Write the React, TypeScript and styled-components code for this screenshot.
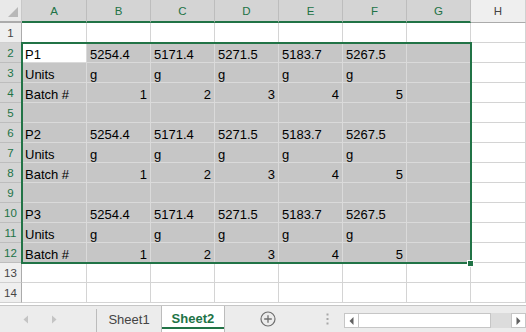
import React from "react";
import styled, { createGlobalStyle } from "styled-components";

const GREEN = "#217346";
const COLS = ["A", "B", "C", "D", "E", "F", "G", "H"];
const VALUES = ["5254.4", "5171.4", "5271.5", "5183.7", "5267.5"];
const ROW_COUNT = 14;

const GlobalStyle = createGlobalStyle`
  html, body {
    margin: 0;
    padding: 0;
    background: #fff;
    overflow: hidden;
  }
  body {
    font-family: "Liberation Sans", Arial, sans-serif;
  }
`;

const isSelectedRow = (r: number) => r >= 2 && r <= 12;
const isSelectedCol = (c: number) => c <= 6;

const cellText = (row: number, col: number): { text: string; num: boolean } => {
  if (row < 2 || row > 12 || col > 6) return { text: "", num: false };
  const kind = (row - 2) % 4;
  const block = Math.floor((row - 2) / 4) + 1;
  if (kind === 0) {
    if (col === 0) return { text: `P${block}`, num: false };
    if (col <= 5) return { text: VALUES[col - 1], num: false };
  }
  if (kind === 1) {
    if (col === 0) return { text: "Units", num: false };
    if (col <= 5) return { text: "g", num: false };
  }
  if (kind === 2) {
    if (col === 0) return { text: "Batch #", num: false };
    if (col <= 5) return { text: String(col), num: true };
  }
  return { text: "", num: false };
};

export default function App() {
  const rows = Array.from({ length: ROW_COUNT }, (_, i) => i + 1);

  return (
    <>
      <GlobalStyle />
      <Window>
        <SheetArea>
          <Grid>
            <Corner>
              <svg width="12" height="12" viewBox="0 0 12 12">
                <polygon points="11,1 11,11 1,11" fill="#b8b8b8" />
              </svg>
            </Corner>
            {COLS.map((c, i) => (
              <ColHeader key={c} $sel={isSelectedCol(i)}>
                {c}
              </ColHeader>
            ))}
            {rows.map((r) => (
              <React.Fragment key={r}>
                <RowHeader $sel={isSelectedRow(r)}>{r}</RowHeader>
                {COLS.map((c, ci) => {
                  const { text, num } = cellText(r, ci);
                  const sel = isSelectedRow(r) && isSelectedCol(ci);
                  return (
                    <Cell
                      key={c}
                      $sel={sel}
                      $active={r === 2 && ci === 0}
                      $num={num}
                    >
                      {text}
                    </Cell>
                  );
                })}
              </React.Fragment>
            ))}
          </Grid>
          <SelectionFrame>
            <FillHandle />
          </SelectionFrame>
        </SheetArea>

        <TabBar>
          <NavArea>
            <svg width="6" height="9" viewBox="0 0 6 9">
              <polygon points="5,0.5 5,8.5 0.5,4.5" fill="#c4c4c4" />
            </svg>
            <svg width="6" height="9" viewBox="0 0 6 9">
              <polygon points="1,0.5 1,8.5 5.5,4.5" fill="#c4c4c4" />
            </svg>
          </NavArea>
          <SheetTab>Sheet1</SheetTab>
          <SheetTab $active>Sheet2</SheetTab>
          <AddArea>
            <svg width="16" height="16" viewBox="0 0 16 16">
              <circle cx="8" cy="8" r="7" fill="none" stroke="#6f6f6f" strokeWidth="1.2" />
              <path d="M8 4.2v7.6M4.2 8h7.6" stroke="#6f6f6f" strokeWidth="1.3" />
            </svg>
          </AddArea>
          <DotsArea>
            <svg width="3" height="12" viewBox="0 0 3 12">
              <rect x="0.5" y="0.5" width="2" height="2" fill="#a8a8a8" />
              <rect x="0.5" y="5" width="2" height="2" fill="#a8a8a8" />
              <rect x="0.5" y="9.5" width="2" height="2" fill="#a8a8a8" />
            </svg>
          </DotsArea>
          <ScrollBar>
            <ScrollButton>
              <svg width="5" height="8" viewBox="0 0 5 8">
                <polygon points="4.5,0 4.5,8 0.5,4" fill="#606060" />
              </svg>
            </ScrollButton>
            <ScrollThumb />
            <ScrollTrack />
            <ScrollButton>
              <svg width="5" height="8" viewBox="0 0 5 8">
                <polygon points="0.5,0 0.5,8 4.5,4" fill="#606060" />
              </svg>
            </ScrollButton>
          </ScrollBar>
        </TabBar>
      </Window>
    </>
  );
}

const Window = styled.div`
  width: 526px;
  height: 332px;
  display: flex;
  flex-direction: column;
  background: #fff;
  overflow: hidden;
`;

const SheetArea = styled.div`
  position: relative;
  height: 305px;
  overflow: hidden;
  flex-shrink: 0;
`;

const Grid = styled.div`
  display: grid;
  grid-template-columns: 22px 65px repeat(6, 64px) 1fr;
  grid-template-rows: 23px;
  grid-auto-rows: 20px;
  font-size: 13px;
  color: #000;
`;

const HeaderBase = styled.div`
  box-sizing: border-box;
  display: flex;
  align-items: center;
  justify-content: center;
  font-size: 11.5px;
  border-right: 1px solid #c8c8c8;
  border-bottom: 1px solid #c8c8c8;
`;

const Corner = styled(HeaderBase)`
  background: #e9e9e9;
  align-items: flex-end;
  justify-content: flex-end;
  padding: 0 2px 3px 0;
  border-bottom: 2px solid #ababab;
`;

const ColHeader = styled(HeaderBase)<{ $sel: boolean }>`
  background: ${(p) => (p.$sel ? "#d4d4d4" : "#efefef")};
  color: ${(p) => (p.$sel ? GREEN : "#444")};
  border-bottom: ${(p) => (p.$sel ? `2px solid ${GREEN}` : "1px solid #ababab")};
  padding-top: ${(p) => (p.$sel ? "1px" : "0")};
  border-right-color: ${(p) => (p.$sel ? "#bdbdbd" : "#d0d0d0")};
`;

const RowHeader = styled(HeaderBase)<{ $sel: boolean }>`
  background: ${(p) => (p.$sel ? "#d4d4d4" : "#efefef")};
  color: ${(p) => (p.$sel ? GREEN : "#444")};
  border-right-color: #ababab;
  border-bottom-color: ${(p) => (p.$sel ? "#bdbdbd" : "#d0d0d0")};
`;

const Cell = styled.div<{ $sel: boolean; $active: boolean; $num: boolean }>`
  box-sizing: border-box;
  display: flex;
  align-items: flex-end;
  justify-content: ${(p) => (p.$num ? "flex-end" : "flex-start")};
  padding: 0 3px;
  line-height: 15px;
  white-space: nowrap;
  overflow: hidden;
  background: ${(p) => (p.$active ? "#fff" : p.$sel ? "#c6c6c6" : "#fff")};
  border-right: 1px solid ${(p) => (p.$sel ? "#dadada" : "#d4d4d4")};
  border-bottom: 1px solid ${(p) => (p.$sel ? "#dadada" : "#d4d4d4")};
`;

const SelectionFrame = styled.div`
  position: absolute;
  left: 21px;
  top: 42px;
  width: 451px;
  height: 222px;
  box-sizing: border-box;
  border: 2px solid ${GREEN};
  pointer-events: none;
`;

const FillHandle = styled.div`
  position: absolute;
  right: -4px;
  bottom: -5px;
  width: 5px;
  height: 5px;
  background: ${GREEN};
  border: 1px solid #fff;
`;

const TabBar = styled.div`
  flex: 1;
  display: flex;
  align-items: stretch;
  background: #ececec;
  border-top: 1px solid #c6c6c6;
  font-size: 13px;
`;

const NavArea = styled.div`
  width: 97px;
  display: flex;
  align-items: center;
  justify-content: flex-start;
  gap: 22px;
  padding-left: 23px;
  box-sizing: border-box;
`;

const SheetTab = styled.div<{ $active?: boolean }>`
  width: 65px;
  box-sizing: border-box;
  display: flex;
  align-items: center;
  justify-content: center;
  margin-top: ${(p) => (p.$active ? "0" : "3px")};
  border-left: 1px solid #bcbcbc;
  border-right: ${(p) => (p.$active ? "1px solid #bcbcbc" : "none")};
  background: ${(p) => (p.$active ? "#fff" : "transparent")};
  color: ${(p) => (p.$active ? GREEN : "#444")};
  font-weight: ${(p) => (p.$active ? 700 : 400)};
  box-shadow: ${(p) => (p.$active ? `inset 0 -3px 0 #fff, inset 0 -5px 0 ${GREEN}` : "none")};
  line-height: 15px;
  padding-bottom: ${(p) => (p.$active ? "2px" : "3px")};
`;

const AddArea = styled.div`
  width: 86px;
  display: flex;
  align-items: center;
  justify-content: center;
`;

const DotsArea = styled.div`
  width: 34px;
  display: flex;
  align-items: center;
  justify-content: center;
`;

const ScrollBar = styled.div`
  flex: 1;
  display: flex;
  height: 15px;
  margin-top: 7px;
  background: #dcdcdc;
`;

const ScrollButton = styled.div`
  width: 15px;
  box-sizing: border-box;
  background: #fff;
  border: 1px solid #c6c6c6;
  display: flex;
  align-items: center;
  justify-content: center;
`;

const ScrollThumb = styled.div`
  width: 132px;
  box-sizing: border-box;
  background: #fff;
  border: 1px solid #c6c6c6;
  border-left: none;
`;

const ScrollTrack = styled.div`
  width: 20px;
`;
